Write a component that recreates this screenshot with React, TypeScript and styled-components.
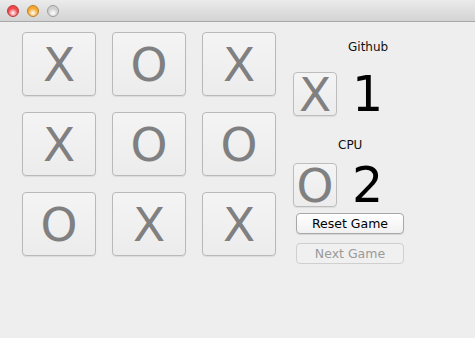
import React from 'react';
import styled, { createGlobalStyle } from 'styled-components';

const GlobalStyle = createGlobalStyle`
  html, body {
    margin: 0;
    padding: 0;
    background: #eeeeee;
  }
  body {
    font-family: "DejaVu Sans", "Liberation Sans", sans-serif;
  }
`;

// Window frame
const Window = styled.div`
  width: 475px;
  height: 338px;
  background: #eeeeee;
  overflow: hidden;
`;

const TitleBar = styled.div`
  height: 21px;
  display: flex;
  align-items: center;
  gap: 8px;
  padding-left: 7px;
  background: linear-gradient(#ebebeb, #d3d3d3);
  border-bottom: 1px solid #a9a9a9;
`;

const Light = styled.span<{ $color: string; $edge: string }>`
  width: 12px;
  height: 12px;
  border-radius: 50%;
  box-sizing: border-box;
  border: 1px solid ${(p) => p.$edge};
  background: radial-gradient(circle at 50% 70%, #ffffff 0%, ${(p) => p.$color} 55%, ${(p) => p.$color} 100%);
`;

const Content = styled.div`
  display: flex;
  padding: 10px 0 0 22px;
`;

// Board
const Board = styled.div`
  display: grid;
  grid-template-columns: repeat(3, 74px);
  grid-auto-rows: 64px;
  gap: 16px;
`;

const Cell = styled.button`
  box-sizing: border-box;
  margin: 0;
  padding: 0;
  border: 1px solid #b9b9b9;
  border-radius: 4px;
  background: linear-gradient(#f4f4f4, #ececec);
  box-shadow: 0 1px 1px rgba(0, 0, 0, 0.08);
  font-family: "DejaVu Sans", sans-serif;
  font-size: 47px;
  line-height: 1;
  color: #808080;
  display: flex;
  align-items: center;
  justify-content: center;
`;

// Side panel
const Side = styled.div`
  display: flex;
  flex-direction: column;
  margin-left: 17px;
  padding-top: 8px;
`;

const PlayerLabel = styled.div<{ $indent: number; $top?: number }>`
  font-size: 12px;
  color: #111;
  height: 15px;
  line-height: 15px;
  padding-left: ${(p) => p.$indent}px;
  margin-top: ${(p) => p.$top ?? 0}px;
`;

const ScoreRow = styled.div<{ $top: number }>`
  display: flex;
  align-items: center;
  gap: 15px;
  margin-top: ${(p) => p.$top}px;
  height: 44px;
`;

const Mark = styled.div`
  box-sizing: border-box;
  width: 44px;
  height: 44px;
  border: 1px solid #bdbdbd;
  border-radius: 4px;
  background: linear-gradient(#f4f4f4, #ececec);
  box-shadow: 0 1px 1px rgba(0, 0, 0, 0.08);
  font-size: 47px;
  line-height: 1;
  color: #808080;
  display: flex;
  align-items: center;
  justify-content: center;
  overflow: visible;
`;

const Score = styled.div`
  font-family: "DejaVu Sans", sans-serif;
  font-size: 49px;
  line-height: 1;
  color: #000;
`;

const ActionButton = styled.button<{ $disabled?: boolean; $top: number }>`
  box-sizing: border-box;
  width: 108px;
  height: 21px;
  margin: ${(p) => p.$top}px 0 0 3px;
  padding: 0;
  border: 1px solid ${(p) => (p.$disabled ? '#cfcfcf' : '#a8a8a8')};
  border-radius: 4px;
  background: ${(p) => (p.$disabled ? '#f0f0f0' : 'linear-gradient(#ffffff, #f1f1f1)')};
  box-shadow: ${(p) => (p.$disabled ? 'none' : '0 1px 1px rgba(0,0,0,0.1)')};
  font-family: "DejaVu Sans", sans-serif;
  font-size: 12.5px;
  color: ${(p) => (p.$disabled ? '#9a9a9a' : '#000')};
`;

const board = ['X', 'O', 'X', 'X', 'O', 'O', 'O', 'X', 'X'];

export default function App() {
  return (
    <Window>
      <GlobalStyle />
      <TitleBar>
        <Light $color="#f0464a" $edge="#b8383a" />
        <Light $color="#f4a833" $edge="#b98129" />
        <Light $color="#cfcfcf" $edge="#9c9c9c" />
      </TitleBar>
      <Content>
        <Board>
          {board.map((v, i) => (
            <Cell key={i} type="button">
              {v}
            </Cell>
          ))}
        </Board>
        <Side>
          <PlayerLabel $indent={55}>Github</PlayerLabel>
          <ScoreRow $top={17}>
            <Mark>X</Mark>
            <Score>1</Score>
          </ScoreRow>
          <PlayerLabel $indent={45} $top={22}>
            CPU
          </PlayerLabel>
          <ScoreRow $top={10}>
            <Mark>O</Mark>
            <Score>2</Score>
          </ScoreRow>
          <ActionButton type="button" $top={6}>
            Reset Game
          </ActionButton>
          <ActionButton type="button" $top={9} $disabled>
            Next Game
          </ActionButton>
        </Side>
      </Content>
    </Window>
  );
}
